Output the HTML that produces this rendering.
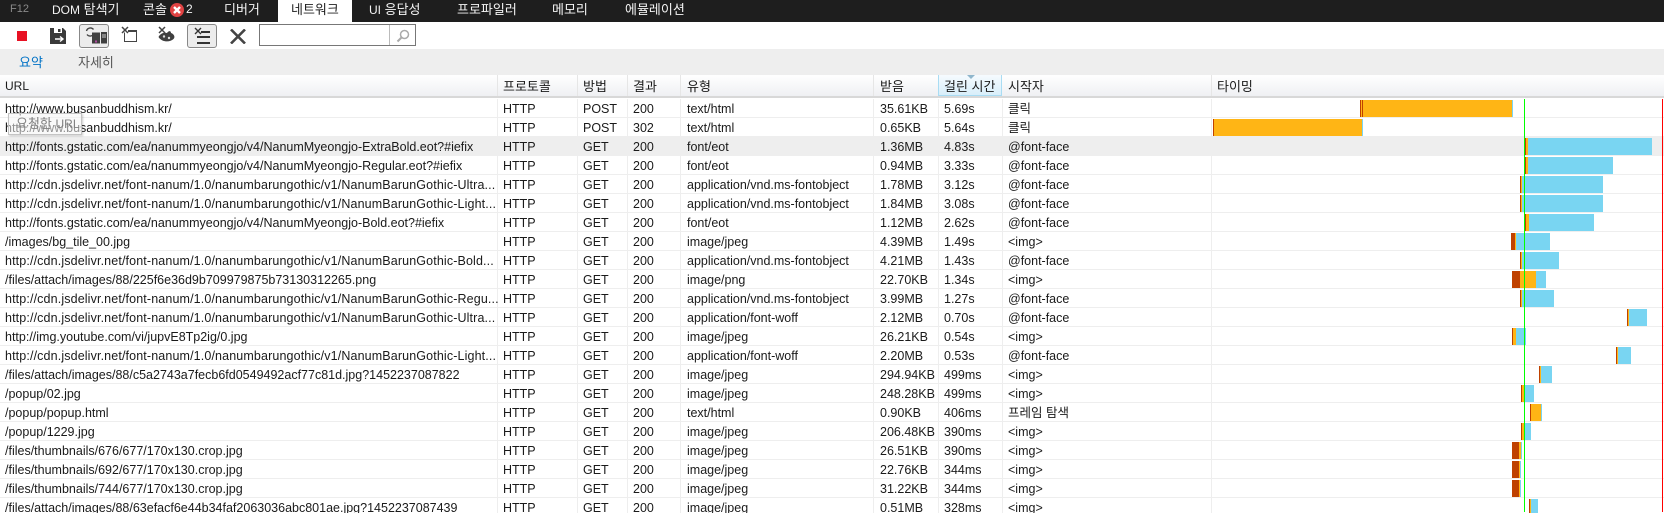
<!DOCTYPE html>
<html lang="ko"><head><meta charset="utf-8"><title>F12 네트워크</title>
<style>
*{box-sizing:border-box;margin:0;padding:0}
html,body{width:1664px;height:513px;overflow:hidden;background:#fff}
body{position:relative;font:12.5px/19px "Liberation Sans","Noto Sans CJK KR",sans-serif;color:#1a1a1a}
.abs{position:absolute}
#top{position:absolute;left:0;top:0;width:1664px;height:22px;background:#1e1e1e}
#top span{position:absolute;top:0;line-height:19px;color:#f4f4f4;font-size:13px;white-space:nowrap}
#top em{font-style:normal;font-size:12px}
#nettab{position:absolute;left:278px;top:0;width:74px;height:22px;background:#fff}
#tabs{position:absolute;left:0;top:49px;width:1664px;height:26px;background:#eee}
#tabs span{position:absolute;top:0;line-height:28px;font-size:13px}
#hd{position:absolute;left:0;top:75px;width:1664px;height:23px;background:linear-gradient(#fff,#eff0f3);border-bottom:2px solid #d8d8d8}
#hd span{position:absolute;top:0;line-height:23px;font-size:13px}
#hd b{position:absolute;top:0;width:1px;height:21px;background:#e6e6e6}
.r{position:absolute;left:0;width:1664px;height:19px;border-bottom:1px solid #eee;white-space:nowrap}
.r span{position:absolute;top:0;line-height:20px;height:19px;overflow:hidden}
.r span.u{letter-spacing:.13px}
.r b{position:absolute;top:0;width:1px;height:18px;background:#eee}
.r i{position:absolute;top:1px;height:17px}
.g{background:#eee}
.d{background:#bf4100}.a{background:#ffb515}.l{background:#79d5f2}
.c1{left:5px}.c2{left:503px}.c3{left:583px}.c4{left:633px}.c5{left:687px}.c6{left:880px}.c7{left:944px}.c8{left:1008px}
.v1{left:497px}.v2{left:577px}.v3{left:627px}.v4{left:680px}.v5{left:873px}.v6{left:938px}.v7{left:1002px}.v8{left:1211px}
.k{font-size:12.5px}
</style></head><body>

<div id="top">
<span style="left:10px;color:#8a8a8a;font-size:11px">F12</span>
<span style="left:52px"><em>DOM</em> 탐색기</span>
<span style="left:143px">콘솔</span>
<svg class="abs" style="left:169px;top:2px" width="16" height="16" viewBox="0 0 16 16"><circle cx="8" cy="8" r="7" fill="#e04343"/><path d="M5 5l6 6M11 5l-6 6" stroke="#fff" stroke-width="2.4"/></svg>
<span style="left:186px;font-size:12px">2</span>
<span style="left:224px">디버거</span>
<div id="nettab"></div>
<span style="left:291px;color:#222">네트워크</span>
<span style="left:369px"><em>UI</em> 응답성</span>
<span style="left:457px">프로파일러</span>
<span style="left:552px">메모리</span>
<span style="left:625px">에뮬레이션</span>
</div>

<div class="abs" style="left:17px;top:31px;width:10px;height:10px;background:#e81123"></div>
<svg class="abs" style="left:50px;top:28px" width="16" height="16" viewBox="0 0 16 16"><path d="M0 0H13L16 3V16H0Z" fill="#3a3a3a"/><path d="M4 0h8v5H4z" fill="#fff"/><path d="M8 1h2.500v3H8z" fill="#3a3a3a"/><path d="M5 11h8M10 8.500l3 2.500-3 2.500" stroke="#fff" stroke-width="1.400" fill="none"/></svg>

<div class="abs" style="left:79px;top:24px;width:30px;height:24px;border:1px solid #888;border-radius:3px;background:#ececec"></div>
<svg class="abs" style="left:85px;top:26px" width="23" height="20" viewBox="0 0 23 20"><path d="M1.500 5a4 4 0 0 1 7 -1.500M9 7a4 4 0 0 1 -7 1.500" stroke="#444" stroke-width="1.400" fill="none"/><path d="M7 6.500h8v11H7z" fill="#3f3f3f"/><path d="M16 6h6v11.500h-6z" fill="#3f3f3f"/><path d="M17 9h4M17 11h4" stroke="#ccc"/><path d="M10 14.500h2v2h-2z" fill="#b04aa0"/></svg>

<svg class="abs" style="left:121px;top:26px" width="17" height="17" viewBox="0 0 17 17"><path d="M1 1l6 6M7 1L1 7" stroke="#444" stroke-width="1.500"/><path d="M3.500 6.500V15.500H15.500V4.500H7" stroke="#444" fill="none"/><path d="M7 5h8.500" stroke="#444" stroke-width="2"/></svg>

<svg class="abs" style="left:158px;top:26px" width="17" height="17" viewBox="0 0 17 17"><path d="M1 1l6 6M7 1L1 7" stroke="#444" stroke-width="1.500"/><path d="M0.500 11C2 7.500 6 6 9 7C11 4 13 5 13 7C16 8 17.500 11 15.500 13C12 16.500 4 16.500 0.500 11Z" fill="#3f3f3f"/><circle cx="6" cy="10.500" r="1.200" fill="#ddd"/><circle cx="11" cy="12" r="1.200" fill="#ddd"/></svg>

<div class="abs" style="left:187px;top:24px;width:30px;height:24px;border:1px solid #888;border-radius:3px;background:#ececec"></div>
<svg class="abs" style="left:194px;top:27px" width="18" height="18" viewBox="0 0 18 18"><path d="M1 1l6 6M7 1L1 7" stroke="#333" stroke-width="1.400"/><path d="M7 5h9M3 10h13M3 16h13" stroke="#333" stroke-width="2"/></svg>

<svg class="abs" style="left:230px;top:29px" width="16" height="15" viewBox="0 0 16 15"><path d="M1 0.500l14 14M15 0.500l-14 14" stroke="#444" stroke-width="2.600"/></svg>

<div class="abs" style="left:259px;top:24px;width:157px;height:22px;border:1px solid #777;background:#fff"></div>
<div class="abs" style="left:389px;top:25px;width:1px;height:20px;background:#bbb"></div>
<svg class="abs" style="left:396px;top:29px" width="14" height="14" viewBox="0 0 14 14"><circle cx="8.500" cy="5.500" r="4" stroke="#aaa" stroke-width="1.500" fill="none"/><path d="M5.500 8.500L1.500 12.500" stroke="#aaa" stroke-width="2"/></svg>

<div id="tabs">
<span style="left:19px;color:#0072c6">요약</span>
<span style="left:78px;color:#555">자세히</span>
</div>

<div id="hd">
<div class="abs" style="left:938px;top:0;width:64px;height:21px;background:linear-gradient(#f6fbfe,#d8eefa);border:1px solid #a9dcf3;border-top:0"></div>
<svg class="abs" style="left:967px;top:0" width="8" height="5" viewBox="0 0 8 5"><path d="M0 0H8L4 4Z" fill="#8fb6cc"/></svg>
<b class="v1"></b><b class="v2"></b><b class="v3"></b><b class="v4"></b><b class="v5"></b><b class="v8"></b>
<span class="c1" style="font-size:12px">URL</span><span class="c2">프로토콜</span><span class="c3">방법</span><span class="c4">결과</span><span class="c5">유형</span><span class="c6">받음</span><span class="c7">걸린 시간</span><span class="c8">시작자</span><span style="left:1217px">타이밍</span>
</div>

<div class="r" style="top:99px"><b class="v1"></b><b class="v2"></b><b class="v3"></b><b class="v4"></b><b class="v5"></b><b class="v6"></b><b class="v7"></b><b class="v8"></b>
<span class="c1">http://www.busanbuddhism.kr/</span><span class="c2">HTTP</span><span class="c3">POST</span><span class="c4">200</span><span class="c5">text/html</span><span class="c6">35.61KB</span><span class="c7">5.69s</span><span class="c8 k">클릭</span>
<i class="d" style="left:1360px;width:3px"></i><i class="a" style="left:1361px;width:1px"></i><i class="a" style="left:1363px;width:149px"></i><i class="l" style="left:1512px;width:1px"></i></div>

<div class="r" style="top:118px"><b class="v1"></b><b class="v2"></b><b class="v3"></b><b class="v4"></b><b class="v5"></b><b class="v6"></b><b class="v7"></b><b class="v8"></b>
<span class="c1">http://www.busanbuddhism.kr/</span><span class="c2">HTTP</span><span class="c3">POST</span><span class="c4">302</span><span class="c5">text/html</span><span class="c6">0.65KB</span><span class="c7">5.64s</span><span class="c8 k">클릭</span>
<i class="d" style="left:1213px;width:1px"></i><i class="a" style="left:1214px;width:148px"></i><i class="l" style="left:1362px;width:1px"></i></div>

<div class="r g" style="top:136px;height:20px;border:0"><span class="c1" style="top:1px">http://fonts.gstatic.com/ea/nanummyeongjo/v4/NanumMyeongjo-ExtraBold.eot?#iefix</span><span class="c2" style="top:1px">HTTP</span><span class="c3" style="top:1px">GET</span><span class="c4" style="top:1px">200</span><span class="c5" style="top:1px">font/eot</span><span class="c6" style="top:1px">1.36MB</span><span class="c7" style="top:1px">4.83s</span><span class="c8" style="top:1px">@font-face</span>
<i class="d" style="left:1525px;width:2px;top:2px"></i><i class="a" style="left:1526px;width:2px;top:2px"></i><i class="l" style="left:1528px;width:124px;top:2px"></i></div>

<div class="r" style="top:156px"><b class="v1"></b><b class="v2"></b><b class="v3"></b><b class="v4"></b><b class="v5"></b><b class="v6"></b><b class="v7"></b><b class="v8"></b>
<span class="c1">http://fonts.gstatic.com/ea/nanummyeongjo/v4/NanumMyeongjo-Regular.eot?#iefix</span><span class="c2">HTTP</span><span class="c3">GET</span><span class="c4">200</span><span class="c5">font/eot</span><span class="c6">0.94MB</span><span class="c7">3.33s</span><span class="c8">@font-face</span>
<i class="d" style="left:1525px;width:1px"></i><i class="a" style="left:1526px;width:2px"></i><i class="l" style="left:1528px;width:85px"></i></div>

<div class="r" style="top:175px"><b class="v1"></b><b class="v2"></b><b class="v3"></b><b class="v4"></b><b class="v5"></b><b class="v6"></b><b class="v7"></b><b class="v8"></b>
<span class="c1 u">http://cdn.jsdelivr.net/font-nanum/1.0/nanumbarungothic/v1/NanumBarunGothic-Ultra...</span><span class="c2">HTTP</span><span class="c3">GET</span><span class="c4">200</span><span class="c5">application/vnd.ms-fontobject</span><span class="c6">1.78MB</span><span class="c7">3.12s</span><span class="c8">@font-face</span>
<i class="d" style="left:1520px;width:1px"></i><i class="a" style="left:1521px;width:1px"></i><i class="l" style="left:1522px;width:81px"></i></div>

<div class="r" style="top:194px"><b class="v1"></b><b class="v2"></b><b class="v3"></b><b class="v4"></b><b class="v5"></b><b class="v6"></b><b class="v7"></b><b class="v8"></b>
<span class="c1 u">http://cdn.jsdelivr.net/font-nanum/1.0/nanumbarungothic/v1/NanumBarunGothic-Light...</span><span class="c2">HTTP</span><span class="c3">GET</span><span class="c4">200</span><span class="c5">application/vnd.ms-fontobject</span><span class="c6">1.84MB</span><span class="c7">3.08s</span><span class="c8">@font-face</span>
<i class="d" style="left:1520px;width:1px"></i><i class="a" style="left:1521px;width:1px"></i><i class="l" style="left:1522px;width:81px"></i></div>

<div class="r" style="top:213px"><b class="v1"></b><b class="v2"></b><b class="v3"></b><b class="v4"></b><b class="v5"></b><b class="v6"></b><b class="v7"></b><b class="v8"></b>
<span class="c1">http://fonts.gstatic.com/ea/nanummyeongjo/v4/NanumMyeongjo-Bold.eot?#iefix</span><span class="c2">HTTP</span><span class="c3">GET</span><span class="c4">200</span><span class="c5">font/eot</span><span class="c6">1.12MB</span><span class="c7">2.62s</span><span class="c8">@font-face</span>
<i class="d" style="left:1525px;width:1px"></i><i class="a" style="left:1526px;width:3px"></i><i class="l" style="left:1529px;width:65px"></i></div>

<div class="r" style="top:232px"><b class="v1"></b><b class="v2"></b><b class="v3"></b><b class="v4"></b><b class="v5"></b><b class="v6"></b><b class="v7"></b><b class="v8"></b>
<span class="c1">/images/bg_tile_00.jpg</span><span class="c2">HTTP</span><span class="c3">GET</span><span class="c4">200</span><span class="c5">image/jpeg</span><span class="c6">4.39MB</span><span class="c7">1.49s</span><span class="c8">&lt;img&gt;</span>
<i class="d" style="left:1511px;width:4px"></i><i class="a" style="left:1515px;width:1px"></i><i class="l" style="left:1516px;width:34px"></i></div>

<div class="r" style="top:251px"><b class="v1"></b><b class="v2"></b><b class="v3"></b><b class="v4"></b><b class="v5"></b><b class="v6"></b><b class="v7"></b><b class="v8"></b>
<span class="c1 u">http://cdn.jsdelivr.net/font-nanum/1.0/nanumbarungothic/v1/NanumBarunGothic-Bold...</span><span class="c2">HTTP</span><span class="c3">GET</span><span class="c4">200</span><span class="c5">application/vnd.ms-fontobject</span><span class="c6">4.21MB</span><span class="c7">1.43s</span><span class="c8">@font-face</span>
<i class="d" style="left:1520px;width:1px"></i><i class="a" style="left:1521px;width:1px"></i><i class="l" style="left:1522px;width:37px"></i></div>

<div class="r" style="top:270px"><b class="v1"></b><b class="v2"></b><b class="v3"></b><b class="v4"></b><b class="v5"></b><b class="v6"></b><b class="v7"></b><b class="v8"></b>
<span class="c1">/files/attach/images/88/225f6e36d9b709979875b73130312265.png</span><span class="c2">HTTP</span><span class="c3">GET</span><span class="c4">200</span><span class="c5">image/png</span><span class="c6">22.70KB</span><span class="c7">1.34s</span><span class="c8">&lt;img&gt;</span>
<i class="d" style="left:1512px;width:8px"></i><i class="a" style="left:1520px;width:16px"></i><i class="l" style="left:1536px;width:10px"></i></div>

<div class="r" style="top:289px"><b class="v1"></b><b class="v2"></b><b class="v3"></b><b class="v4"></b><b class="v5"></b><b class="v6"></b><b class="v7"></b><b class="v8"></b>
<span class="c1 u">http://cdn.jsdelivr.net/font-nanum/1.0/nanumbarungothic/v1/NanumBarunGothic-Regu...</span><span class="c2">HTTP</span><span class="c3">GET</span><span class="c4">200</span><span class="c5">application/vnd.ms-fontobject</span><span class="c6">3.99MB</span><span class="c7">1.27s</span><span class="c8">@font-face</span>
<i class="d" style="left:1520px;width:1px"></i><i class="a" style="left:1521px;width:1px"></i><i class="l" style="left:1522px;width:32px"></i></div>

<div class="r" style="top:308px"><b class="v1"></b><b class="v2"></b><b class="v3"></b><b class="v4"></b><b class="v5"></b><b class="v6"></b><b class="v7"></b><b class="v8"></b>
<span class="c1 u">http://cdn.jsdelivr.net/font-nanum/1.0/nanumbarungothic/v1/NanumBarunGothic-Ultra...</span><span class="c2">HTTP</span><span class="c3">GET</span><span class="c4">200</span><span class="c5">application/font-woff</span><span class="c6">2.12MB</span><span class="c7">0.70s</span><span class="c8">@font-face</span>
<i class="d" style="left:1627px;width:1px"></i><i class="a" style="left:1628px;width:1px"></i><i class="l" style="left:1629px;width:18px"></i></div>

<div class="r" style="top:327px"><b class="v1"></b><b class="v2"></b><b class="v3"></b><b class="v4"></b><b class="v5"></b><b class="v6"></b><b class="v7"></b><b class="v8"></b>
<span class="c1">http://img.youtube.com/vi/jupvE8Tp2ig/0.jpg</span><span class="c2">HTTP</span><span class="c3">GET</span><span class="c4">200</span><span class="c5">image/jpeg</span><span class="c6">26.21KB</span><span class="c7">0.54s</span><span class="c8">&lt;img&gt;</span>
<i class="d" style="left:1512px;width:1px"></i><i class="a" style="left:1513px;width:3px"></i><i class="l" style="left:1516px;width:10px"></i></div>

<div class="r" style="top:346px"><b class="v1"></b><b class="v2"></b><b class="v3"></b><b class="v4"></b><b class="v5"></b><b class="v6"></b><b class="v7"></b><b class="v8"></b>
<span class="c1 u">http://cdn.jsdelivr.net/font-nanum/1.0/nanumbarungothic/v1/NanumBarunGothic-Light...</span><span class="c2">HTTP</span><span class="c3">GET</span><span class="c4">200</span><span class="c5">application/font-woff</span><span class="c6">2.20MB</span><span class="c7">0.53s</span><span class="c8">@font-face</span>
<i class="d" style="left:1616px;width:1px"></i><i class="a" style="left:1617px;width:1px"></i><i class="l" style="left:1618px;width:13px"></i></div>

<div class="r" style="top:365px"><b class="v1"></b><b class="v2"></b><b class="v3"></b><b class="v4"></b><b class="v5"></b><b class="v6"></b><b class="v7"></b><b class="v8"></b>
<span class="c1">/files/attach/images/88/c5a2743a7fecb6fd0549492acf77c81d.jpg?1452237087822</span><span class="c2">HTTP</span><span class="c3">GET</span><span class="c4">200</span><span class="c5">image/jpeg</span><span class="c6">294.94KB</span><span class="c7">499ms</span><span class="c8">&lt;img&gt;</span>
<i class="d" style="left:1539px;width:1px"></i><i class="a" style="left:1540px;width:1px"></i><i class="l" style="left:1541px;width:11px"></i></div>

<div class="r" style="top:384px"><b class="v1"></b><b class="v2"></b><b class="v3"></b><b class="v4"></b><b class="v5"></b><b class="v6"></b><b class="v7"></b><b class="v8"></b>
<span class="c1">/popup/02.jpg</span><span class="c2">HTTP</span><span class="c3">GET</span><span class="c4">200</span><span class="c5">image/jpeg</span><span class="c6">248.28KB</span><span class="c7">499ms</span><span class="c8">&lt;img&gt;</span>
<i class="d" style="left:1521px;width:1px"></i><i class="a" style="left:1522px;width:2px"></i><i class="l" style="left:1524px;width:10px"></i></div>

<div class="r" style="top:403px"><b class="v1"></b><b class="v2"></b><b class="v3"></b><b class="v4"></b><b class="v5"></b><b class="v6"></b><b class="v7"></b><b class="v8"></b>
<span class="c1">/popup/popup.html</span><span class="c2">HTTP</span><span class="c3">GET</span><span class="c4">200</span><span class="c5">text/html</span><span class="c6">0.90KB</span><span class="c7">406ms</span><span class="c8 k">프레임 탐색</span>
<i class="d" style="left:1530px;width:1px"></i><i class="a" style="left:1531px;width:10px"></i><i class="l" style="left:1541px;width:1px"></i></div>

<div class="r" style="top:422px"><b class="v1"></b><b class="v2"></b><b class="v3"></b><b class="v4"></b><b class="v5"></b><b class="v6"></b><b class="v7"></b><b class="v8"></b>
<span class="c1">/popup/1229.jpg</span><span class="c2">HTTP</span><span class="c3">GET</span><span class="c4">200</span><span class="c5">image/jpeg</span><span class="c6">206.48KB</span><span class="c7">390ms</span><span class="c8">&lt;img&gt;</span>
<i class="d" style="left:1521px;width:1px"></i><i class="a" style="left:1522px;width:2px"></i><i class="l" style="left:1524px;width:7px"></i></div>

<div class="r" style="top:441px"><b class="v1"></b><b class="v2"></b><b class="v3"></b><b class="v4"></b><b class="v5"></b><b class="v6"></b><b class="v7"></b><b class="v8"></b>
<span class="c1">/files/thumbnails/676/677/170x130.crop.jpg</span><span class="c2">HTTP</span><span class="c3">GET</span><span class="c4">200</span><span class="c5">image/jpeg</span><span class="c6">26.51KB</span><span class="c7">390ms</span><span class="c8">&lt;img&gt;</span>
<i class="d" style="left:1512px;width:7px"></i><i class="a" style="left:1519px;width:2px"></i><i class="l" style="left:1521px;width:1px"></i></div>

<div class="r" style="top:460px"><b class="v1"></b><b class="v2"></b><b class="v3"></b><b class="v4"></b><b class="v5"></b><b class="v6"></b><b class="v7"></b><b class="v8"></b>
<span class="c1">/files/thumbnails/692/677/170x130.crop.jpg</span><span class="c2">HTTP</span><span class="c3">GET</span><span class="c4">200</span><span class="c5">image/jpeg</span><span class="c6">22.76KB</span><span class="c7">344ms</span><span class="c8">&lt;img&gt;</span>
<i class="d" style="left:1512px;width:7px"></i><i class="a" style="left:1519px;width:1px"></i><i class="l" style="left:1520px;width:1px"></i></div>

<div class="r" style="top:479px"><b class="v1"></b><b class="v2"></b><b class="v3"></b><b class="v4"></b><b class="v5"></b><b class="v6"></b><b class="v7"></b><b class="v8"></b>
<span class="c1">/files/thumbnails/744/677/170x130.crop.jpg</span><span class="c2">HTTP</span><span class="c3">GET</span><span class="c4">200</span><span class="c5">image/jpeg</span><span class="c6">31.22KB</span><span class="c7">344ms</span><span class="c8">&lt;img&gt;</span>
<i class="d" style="left:1512px;width:7px"></i><i class="a" style="left:1519px;width:1px"></i><i class="l" style="left:1520px;width:1px"></i></div>

<div class="r" style="top:498px;border:0"><b class="v1"></b><b class="v2"></b><b class="v3"></b><b class="v4"></b><b class="v5"></b><b class="v6"></b><b class="v7"></b><b class="v8"></b>
<span class="c1">/files/attach/images/88/63efacf6e44b34faf2063036abc801ae.jpg?1452237087439</span><span class="c2">HTTP</span><span class="c3">GET</span><span class="c4">200</span><span class="c5">image/jpeg</span><span class="c6">0.51MB</span><span class="c7">328ms</span><span class="c8">&lt;img&gt;</span>
<i class="d" style="left:1529px;width:1px"></i><i class="a" style="left:1530px;width:1px"></i><i class="l" style="left:1531px;width:7px;height:14px"></i></div>

<div class="abs" style="left:1524px;top:99px;width:1px;height:413px;background:#00ff00"></div>
<div class="abs" style="left:1662px;top:99px;width:1px;height:413px;background:#ff0000"></div>

<div class="abs" style="left:8px;top:113px;width:74px;height:22px;background:rgba(244,244,244,.55);border:1px solid #c4c4c4;box-shadow:1px 1px 2px rgba(0,0,0,.2);color:#808080;font-size:13px;line-height:20px;padding-left:7px;white-space:nowrap">요청한 <span style="font-size:12px">URL</span></div>

</body></html>
